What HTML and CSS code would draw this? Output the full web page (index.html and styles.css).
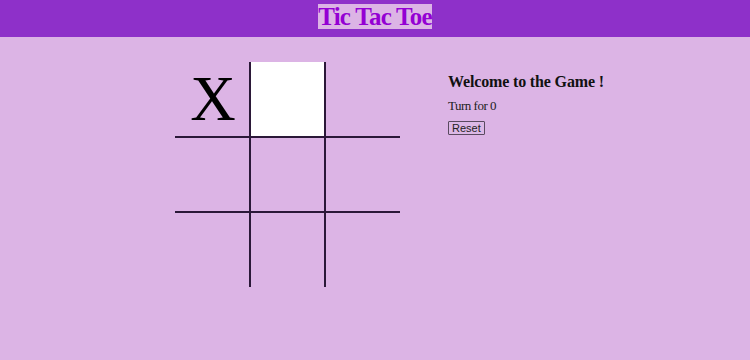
FILE: index.html
```html
<!DOCTYPE html>
<html>
<head>
<meta charset="utf-8">
<title>Tic Tac Toe</title>
<link rel="stylesheet" href="styles.css">
</head>
<body>
<header class="top">
  <h1 class="title">Tic Tac Toe</h1>
</header>
<main class="game">
  <div class="board">
    <div class="cell c-r c-b">X</div>
    <div class="cell c-r c-b hover"></div>
    <div class="cell c-b"></div>
    <div class="cell c-r c-b"></div>
    <div class="cell c-r c-b"></div>
    <div class="cell c-b"></div>
    <div class="cell c-r"></div>
    <div class="cell c-r"></div>
    <div class="cell"></div>
  </div>
  <div class="panel">
    <h2 class="welcome">Welcome to the Game !</h2>
    <p class="turn">Turn for 0</p>
    <button class="reset">Reset</button>
  </div>
</main>
</body>
</html>
```

FILE: styles.css
```css
html, body {
  margin: 0;
  padding: 0;
}
body {
  background: #dcb4e5;
  font-family: "Liberation Serif", "Times New Roman", serif;
  width: 750px;
  height: 360px;
  overflow: hidden;
}
.top {
  background: #8e30c9;
  text-align: center;
  padding: 4px 0 8px;
}
.title {
  display: inline-block;
  margin: 0;
  font-size: 25px;
  line-height: 25px;
  letter-spacing: -0.75px;
  font-weight: bold;
  color: #9400d3;
  background: #dcb4e5;
}
.game {
  display: flex;
  align-items: flex-start;
  padding: 25px 0 0 175px;
}
.board {
  display: grid;
  grid-template-columns: 76px 75px 74px;
  grid-template-rows: 76px 75px 74px;
}
.cell {
  box-sizing: border-box;
  display: flex;
  align-items: center;
  justify-content: center;
  font-size: 63px;
  line-height: 1;
  letter-spacing: -2px;
  color: #000;
}
.c-r {
  border-right: 2px solid #2b1838;
}
.c-b {
  border-bottom: 2px solid #2b1838;
}
.hover {
  background: #ffffff;
}
.panel {
  margin-left: 48px;
  padding-top: 11px;
}
.welcome {
  margin: 0;
  font-size: 16px;
  line-height: 18px;
  letter-spacing: -0.15px;
  font-weight: bold;
  color: #111;
}
.turn {
  margin: 7px 0 8px;
  font-size: 13px;
  line-height: 15px;
  letter-spacing: -0.5px;
  color: #222;
}
.reset {
  display: block;
  margin: 0;
  font-family: "Liberation Sans", Arial, sans-serif;
  font-size: 11px;
  line-height: 11px;
  height: 14px;
  padding: 0 3px;
  background: #dcb8e6;
  border: 1px solid #5a4a60;
  border-radius: 1px;
  color: #222;
}
```
